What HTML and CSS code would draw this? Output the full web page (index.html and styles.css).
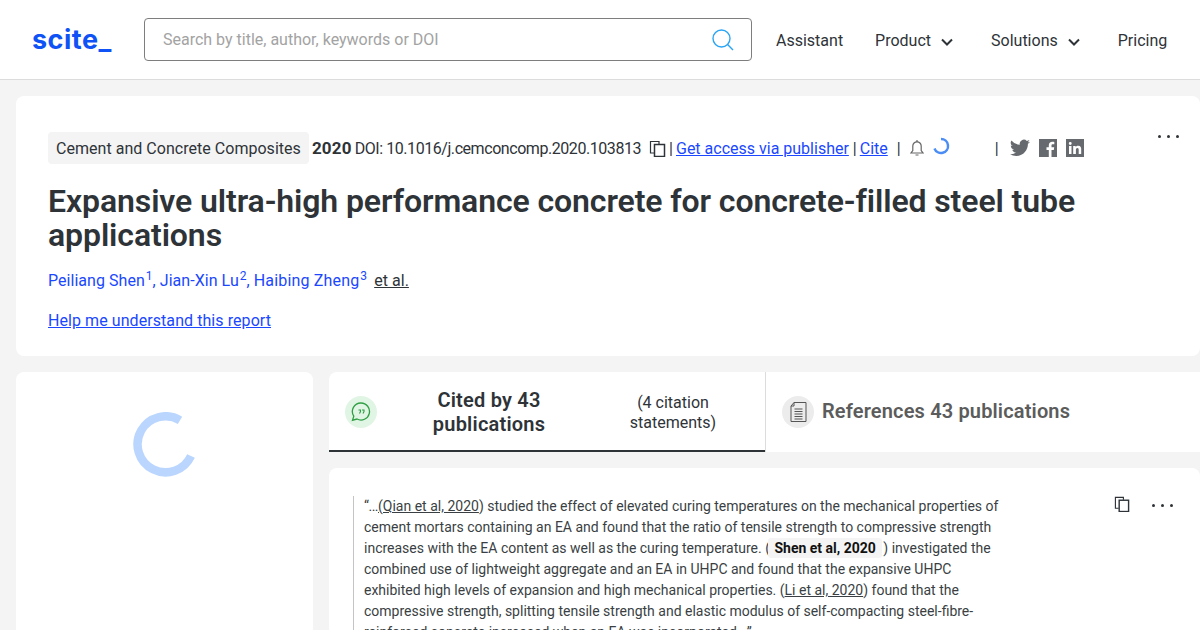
FILE: index.html
```html
<!DOCTYPE html>
<html lang="en">
<head>
    <meta charset="UTF-8">
    <title>Expansive ultra-high performance concrete for concrete-filled steel tube applications</title>
    <link rel="stylesheet" href="styles.css">
</head>
<body>
    <header class="topbar">
        <div class="logo">scite_</div>
        <div class="search">
            <span class="search-text">Search by title, author, keywords or DOI</span>
            <svg class="search-icon" width="24" height="24" viewBox="0 0 24 24" fill="none" stroke="#2aa5f5" stroke-width="1.4"><circle cx="10.5" cy="10.5" r="8.5"/><path d="M16.6 16.6L22 22"/></svg>
        </div>
        <nav class="nav">
            <span class="nav-item">Assistant</span>
            <span class="nav-item">Product <svg class="chev" width="12" height="8" viewBox="0 0 12 8" fill="none" stroke="#2e3338" stroke-width="2"><path d="M1 1.5l5 5 5-5"/></svg></span>
            <span class="nav-item">Solutions <svg class="chev" width="12" height="8" viewBox="0 0 12 8" fill="none" stroke="#2e3338" stroke-width="2"><path d="M1 1.5l5 5 5-5"/></svg></span>
            <span class="nav-item">Pricing</span>
        </nav>
    </header>

    <section class="paper card">
        <div class="meta">
            <span class="journal">Cement and Concrete Composites</span>
            <b class="year">2020</b>
            <span class="doi">DOI: 10.1016/j.cemconcomp.2020.103813</span>
            <svg class="copy" width="17" height="17" viewBox="0 0 17 17" fill="none" stroke="#2e3338" stroke-width="1.2"><path d="M5 13H1.5V1.5H10V4"/><rect x="5.5" y="4.5" width="10" height="12" stroke-width="1.5"/></svg>
            <span class="sep">|</span>
            <a class="link" href="#">Get access via publisher</a>
            <span class="sep">|</span>
            <a class="link" href="#">Cite</a>
            <span class="sep sep-wide">|</span>
            <svg class="bell" width="14" height="18" viewBox="0 0 14 18" fill="none" stroke="#666" stroke-width="1.2"><path d="M1 14h12l-1.8-2.5V7a4.2 4.2 0 0 0-8.400 0v4.500z"/><path d="M7 1v2M5.500 16h3"/></svg>
            <svg class="mini-spin" width="18" height="18" viewBox="0 0 18 18" fill="none" stroke="#4b8df5" stroke-width="2.500"><path d="M9 2a7 7 0 1 1-6.500 9.500"/></svg>
            <span class="sep sep-share">|</span>
            <svg class="share" width="20" height="18" viewBox="0 0 24 20" fill="#666a6e"><path d="M24 2.400a9.800 9.800 0 0 1-2.800.8A5 5 0 0 0 23.300.5a9.800 9.800 0 0 1-3.100 1.200 4.900 4.900 0 0 0-8.400 4.500A14 14 0 0 1 1.700 1a4.900 4.900 0 0 0 1.500 6.600 4.900 4.900 0 0 1-2.200-.6v.1a4.900 4.900 0 0 0 3.900 4.800 4.900 4.900 0 0 1-2.200.1 4.900 4.900 0 0 0 4.600 3.400A9.900 9.900 0 0 1 0 17.400 14 14 0 0 0 7.500 19.600c9.100 0 14-7.500 14-14v-.6A10 10 0 0 0 24 2.400z"/></svg>
            <svg class="share" width="18" height="18" viewBox="0 0 18 18"><rect width="18" height="18" fill="#666a6e"/><path d="M12.500 18v-7h2.300l.4-2.700h-2.700V6.600c0-.8.300-1.300 1.400-1.300h1.400V2.900c-.3 0-1.100-.1-2-.1-2.100 0-3.500 1.300-3.500 3.600v1.900H7.500V11h2.300v7z" fill="#fff"/></svg>
            <svg class="share" width="18" height="18" viewBox="0 0 18 18"><rect width="18" height="18" fill="#666a6e"/><path d="M3 7h2.500v8H3zM4.250 3a1.450 1.450 0 1 1 0 2.900 1.450 1.450 0 0 1 0-2.900zM7.200 7h2.400v1.100c.4-.7 1.300-1.300 2.600-1.300 2.600 0 3 1.700 3 3.900V15h-2.500v-3.800c0-1 0-2.200-1.300-2.200s-1.500 1-1.500 2.100V15H7.200z" fill="#fff"/></svg>
        </div>
        <div class="dots dots-paper"><i></i><i></i><i></i></div>
        <h1 class="title">Expansive ultra-high performance concrete for concrete-filled steel tube applications</h1>
        <p class="authors">
            <a class="author" href="#">Peiliang Shen</a><sup class="author">1</sup><span class="author">, </span><a class="author" href="#">Jian-Xin Lu</a><sup class="author">2</sup><span class="author">, </span><a class="author author-last" href="#">Haibing Zheng</a><sup class="author">3</sup>
            <a class="etal" href="#">et al.</a>
        </p>
        <a class="link help" href="#">Help me understand this report</a>
    </section>

    <div class="columns">
        <aside class="side card">
            <svg width="66" height="66" viewBox="0 0 66 66" fill="none" stroke="#bbd6fe" stroke-width="8.500"><path d="M48 8.300A28 28 0 1 0 59 44"/></svg>
        </aside>
        <main class="main">
            <div class="tabs">
                <div class="tab tab-cited">
                    <span class="tab-icon icon-green">
                        <svg width="20" height="20" viewBox="0 0 20 20" fill="none" stroke="#2f9e44" stroke-width="1.300"><path d="M10 1a8.500 8.500 0 1 1-4 16l-4.500 1.200 1.300-4A8.500 8.500 0 0 1 10 1z"/><path d="M7.500 8h2v1.500L8.500 11.500M11 8h2v1.500L12 11.500" stroke-width="1.100"/></svg>
                    </span>
                    <strong class="cited-label">Cited by 43 publications</strong>
                    <span class="cited-note">(4 citation statements)</span>
                </div>
                <div class="tab tab-refs">
                    <span class="tab-icon icon-grey">
                        <svg width="17" height="20" viewBox="0 0 17 20" fill="none" stroke="#555" stroke-width="1"><path d="M4 .5h12v19H1V4z"/><path d="M4 .5V4H1M4.500 7h8M4.500 9.500h8M4.500 12h8M4.500 14.500h8M4.500 17h8"/></svg>
                    </span>
                    <strong class="refs-label">References 43 publications</strong>
                </div>
            </div>
            <article class="statement card">
                <blockquote class="quote"><span class="ellipsis">“...</span><a class="cite" href="#">(Qian et al, 2020</a>) studied the effect of elevated curing temperatures on the mechanical properties of cement mortars containing an EA and found that the ratio of tensile strength to compressive strength increases with the EA content as well as the curing temperature. ( <b class="hl">Shen et al, 2020</b> ) investigated the combined use of lightweight aggregate and an EA in UHPC and found that the expansive UHPC exhibited high levels of expansion and high mechanical properties. (<a class="cite" href="#">Li et al, 2020</a>) found that the compressive strength, splitting tensile strength and elastic modulus of self-compacting steel-fibre-reinforced concrete increased when an EA was incorporated...”</blockquote>
                <div class="tools">
                    <svg width="16" height="16" viewBox="0 0 17 17" fill="none" stroke="#2e3338" stroke-width="1.200"><path d="M5 13H1.500V1.500H10V4"/><rect x="5.500" y="4.500" width="10" height="12" stroke-width="1.500"/></svg>
                    <div class="dots"><i></i><i></i><i></i></div>
                </div>
            </article>
        </main>
    </div>
</body>
</html>
```

FILE: styles.css
```css
* {
    box-sizing: border-box;
}

html, body {
    height: 630px;
    overflow: hidden;
}

body {
    margin: 0;
    background: #f4f4f4;
    color: #2e3338;
    font-family: Roboto, "Liberation Sans", sans-serif;
}

a {
    color: inherit;
}

.card {
    background: white;
    border-radius: 8px;
}

.topbar {
    height: 80px;
    background: white;
    border-bottom: 1px solid #dcdcdc;
    display: flex;
    align-items: center;
    padding: 0 32px;
}

.logo {
    width: 112px;
    color: #0f52f5;
    font-family: Inter, sans-serif;
    font-size: 27px;
    font-weight: 700;
    letter-spacing: 0.5px;
}

.search {
    width: 608px;
    height: 43px;
    border: 1px solid #7e7e7e;
    border-radius: 4px;
    display: flex;
    align-items: center;
    justify-content: space-between;
    padding: 0 16px 0 18px;
}

.search-text {
    color: #a3a3a3;
    font-size: 16px;
}

.nav {
    display: flex;
    align-items: center;
    gap: 32px;
    margin: 1px 0 0 24px;
    font-size: 16px;
}

.nav-item {
    display: flex;
    align-items: center;
    gap: 10px;
    white-space: nowrap;
}

.chev {
    margin: 3px 6px 0 0;
}

.paper {
    position: relative;
    margin: 16px 0 0 16px;
    height: 260px;
    padding: 36px 32px 0;
}

.meta {
    display: flex;
    align-items: center;
    height: 32px;
    font-size: 16px;
    white-space: nowrap;
}

.journal {
    background: #f4f4f4;
    border-radius: 4px;
    padding: 1px 8px 0;
    height: 32px;
    line-height: 31px;
    letter-spacing: 0.03px;
    margin-right: 3px;
}

.year {
    font-size: 17px;
    font-weight: 700;
    letter-spacing: 0.2px;
    margin-right: 3px;
}

.doi {
    letter-spacing: -0.44px;
}

.copy {
    margin: 1px 3px 0 8px;
}

.sep {
    margin: 0 3px 0 0;
}

.link {
    color: #1a47ff;
    margin-right: 4px;
}

.sep-wide {
    margin: 0 9px 0 5px;
}

.bell {
    margin-right: 8px;
}

.mini-spin {
    margin-top: -4px;
}

.sep-share {
    margin: 0 11px 0 45px;
}

.share {
    margin-right: 9px;
}

.dots {
    display: flex;
    gap: 6px;
}

.dots i {
    width: 3px;
    height: 3px;
    border-radius: 50%;
    background: #2e3338;
}

.dots-paper {
    position: absolute;
    top: 39px;
    right: 21px;
}

.title {
    margin: 20px 0 0;
    font-size: 32px;
    line-height: 34px;
    font-weight: 600;
    letter-spacing: -0.1px;
    max-width: 1080px;
}

.authors {
    margin: 17px 0 0;
    font-size: 16px;
    line-height: 24px;
    letter-spacing: 0.04px;
}

.author {
    color: #1a47ff;
    text-decoration: none;
}

.author-last {
    letter-spacing: 0.17px;
}

sup.author {
    font-size: 12px;
    line-height: 0;
    margin-left: 1px;
}

.etal {
    margin-left: 3px;
}

.help {
    display: block;
    width: max-content;
    margin-top: 16px;
    line-height: 24px;
    font-size: 16px;
    letter-spacing: 0.07px;
}

.columns {
    display: flex;
    gap: 16px;
    margin: 16px 0 0 16px;
}

.side {
    width: 297px;
    height: 300px;
    flex: none;
    padding: 40px 0 0 116px;
}

.main {
    flex: 1;
}

.tabs {
    display: flex;
    height: 80px;
}

.tab {
    background: white;
    display: flex;
    align-items: center;
}

.tab-cited {
    width: 436px;
    padding: 2px 16px 0;
    border-bottom: 2px solid #2e3338;
    border-top-left-radius: 8px;
}

.tab-refs {
    flex: 1;
    border-left: 1px solid #dcdcdc;
    padding: 0 16px;
}

.tab-icon {
    width: 32px;
    height: 32px;
    border-radius: 50%;
    display: flex;
    align-items: center;
    justify-content: center;
    flex: none;
}

.icon-green {
    background: #e1f5e4;
}

.icon-grey {
    background: #ececec;
}

.cited-label {
    width: 160px;
    margin-left: 32px;
    font-size: 20px;
    line-height: 24px;
    font-weight: 600;
    letter-spacing: 0.2px;
    text-align: center;
}

.cited-note {
    width: 120px;
    margin: 2px 0 0 44px;
    font-size: 16px;
    line-height: 20px;
    text-align: center;
}

.refs-label {
    margin-left: 8px;
    font-size: 20px;
    font-weight: 600;
    letter-spacing: 0.15px;
    color: #5c5c5c;
    margin-top: -2px;
}

.statement {
    margin-top: 16px;
    height: 200px;
    padding: 28px 32px 0 24px;
    display: flex;
    justify-content: space-between;
}

.quote {
    margin: 0;
    width: 652px;
    height: 180px;
    border-left: 1px solid #c4c4c4;
    padding-left: 10px;
    font-size: 14px;
    line-height: 21px;
    color: #3a3f44;
}

.ellipsis {
    letter-spacing: -0.5px;
}

.cite {
    text-decoration: underline;
}

.hl {
    background: #f4f4f4;
    color: #111;
    padding: 2px 6px;
    margin: 0 -2px 0 -5px;
    border-radius: 3px;
}

.tools {
    display: flex;
    gap: 22px;
    align-items: flex-start;
    margin-right: -5px;
}

.tools .dots {
    margin-top: 8px;
}
```
